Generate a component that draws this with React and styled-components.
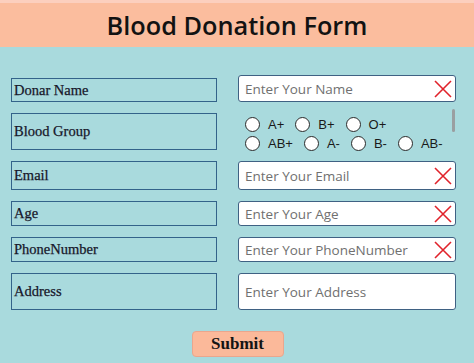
import React from "react";
import styled, { createGlobalStyle } from "styled-components";

const GlobalStyle = createGlobalStyle`
  html, body {
    margin: 0;
    padding: 0;
    background: #a9dadd;
  }
`;

const Page = styled.div`
  width: 474px;
  height: 363px;
  background: #a9dadd;
  overflow: hidden;
`;

const Header = styled.header`
  height: 47px;
  background: #fbbd9e;
  border-top: 3px solid #fccfbe;
  box-sizing: border-box;
  display: flex;
  align-items: center;
  justify-content: center;
`;

const Title = styled.h1`
  margin: 0;
  font-family: "Open Sans", sans-serif;
  font-weight: 600;
  font-size: 25.3px;
  color: #121212;
`;

const Form = styled.form`
  display: grid;
  grid-template-columns: 206px 218px;
  grid-template-rows: 27px 37px 29px 25px 25px 37px;
  column-gap: 21px;
  row-gap: 11px;
  padding: 28px 18px 0 11px;
`;

const Label = styled.div`
  height: ${(p) => p.h}px;
  align-self: end;
  box-sizing: border-box;
  border: 1.5px solid #33638a;
  display: flex;
  align-items: center;
  padding-left: 2px;
  font-family: "Liberation Serif", serif;
  font-size: 14.5px;
  color: #17172a;
  -webkit-text-stroke: 0.25px #17172a;
`;

const Field = styled.div`
  position: relative;
  height: 100%;
  box-sizing: border-box;
  background: #fff;
  border: 1px solid #3f6183;
  border-radius: 3px;
  display: flex;
  align-items: center;
`;

const Input = styled.input`
  flex: 1;
  min-width: 0;
  height: 100%;
  border: none;
  outline: none;
  background: transparent;
  padding: 0 0 0 6px;
  font-family: "Open Sans", sans-serif;
  font-size: 13.5px;
  color: #222;

  &::placeholder {
    color: #707070;
  }
`;

const Clear = styled.span`
  width: 18px;
  height: 18px;
  margin-right: 3px;
  display: flex;
`;

const RadioBox = styled.div`
  position: relative;
  display: flex;
  flex-direction: column;
  justify-content: center;
  gap: 5px;
  padding-left: 7px;
  padding-top: 4px;
`;

const RadioRow = styled.div`
  display: flex;
  column-gap: 11px;
`;

const RadioItem = styled.label`
  display: flex;
  align-items: center;
  gap: 8px;
  font-family: "Liberation Sans", Arial, sans-serif;
  font-size: 13px;
  color: #1a1a1a;
  height: 14px;
`;

const Radio = styled.input`
  appearance: none;
  margin: 0;
  width: 15px;
  height: 15px;
  border: 1px solid #2a2a2a;
  border-radius: 50%;
  background: #fff;
`;

const Thumb = styled.span`
  position: absolute;
  right: 1px;
  top: -4px;
  width: 3px;
  height: 23px;
  border-radius: 2px;
  background: #9a9fa1;
`;

const Footer = styled.div`
  display: flex;
  justify-content: center;
  padding-top: 21px;
  padding-left: 1px;
`;

const SubmitButton = styled.button`
  width: 92px;
  height: 26px;
  background: #fbb99a;
  border: 1px solid #eaa68d;
  border-radius: 4px;
  font-family: "Liberation Serif", serif;
  font-weight: 700;
  font-size: 17px;
  color: #141414;
  padding: 0;
`;

const CrossIcon = () => (
  <svg width="18" height="18" viewBox="0 0 18 18">
    <path d="M1 1 L17 17 M17 1 L1 17" stroke="#e0232b" strokeWidth="1.6" fill="none" />
  </svg>
);

const rows = [
  { label: "Donar Name", placeholder: "Enter Your Name", h: 24, clear: true },
  { label: "Blood Group", radios: true, h: 37 },
  { label: "Email", placeholder: "Enter Your Email", h: 29, clear: true },
  { label: "Age", placeholder: "Enter Your Age", h: 25, clear: true },
  { label: "PhoneNumber", placeholder: "Enter Your PhoneNumber", h: 25, clear: true },
  { label: "Address", placeholder: "Enter Your Address", h: 37 },
];

const groups = [
  ["A+", "B+", "O+"],
  ["AB+", "A-", "B-", "AB-"],
];

export default function App() {
  return (
    <Page>
      <GlobalStyle />
      <Header>
        <Title>Blood Donation Form</Title>
      </Header>
      <Form onSubmit={(e) => e.preventDefault()}>
        {rows.map((row) => (
          <React.Fragment key={row.label}>
            <Label h={row.h}>{row.label}</Label>
            {row.radios ? (
              <RadioBox>
                {groups.map((g, i) => (
                  <RadioRow key={i}>
                    {g.map((b) => (
                      <RadioItem key={b}>
                        <Radio type="radio" name="blood" value={b} />
                        {b}
                      </RadioItem>
                    ))}
                  </RadioRow>
                ))}
                <Thumb />
              </RadioBox>
            ) : (
              <Field>
                <Input placeholder={row.placeholder} />
                {row.clear && (
                  <Clear>
                    <CrossIcon />
                  </Clear>
                )}
              </Field>
            )}
          </React.Fragment>
        ))}
      </Form>
      <Footer>
        <SubmitButton type="button">Submit</SubmitButton>
      </Footer>
    </Page>
  );
}
